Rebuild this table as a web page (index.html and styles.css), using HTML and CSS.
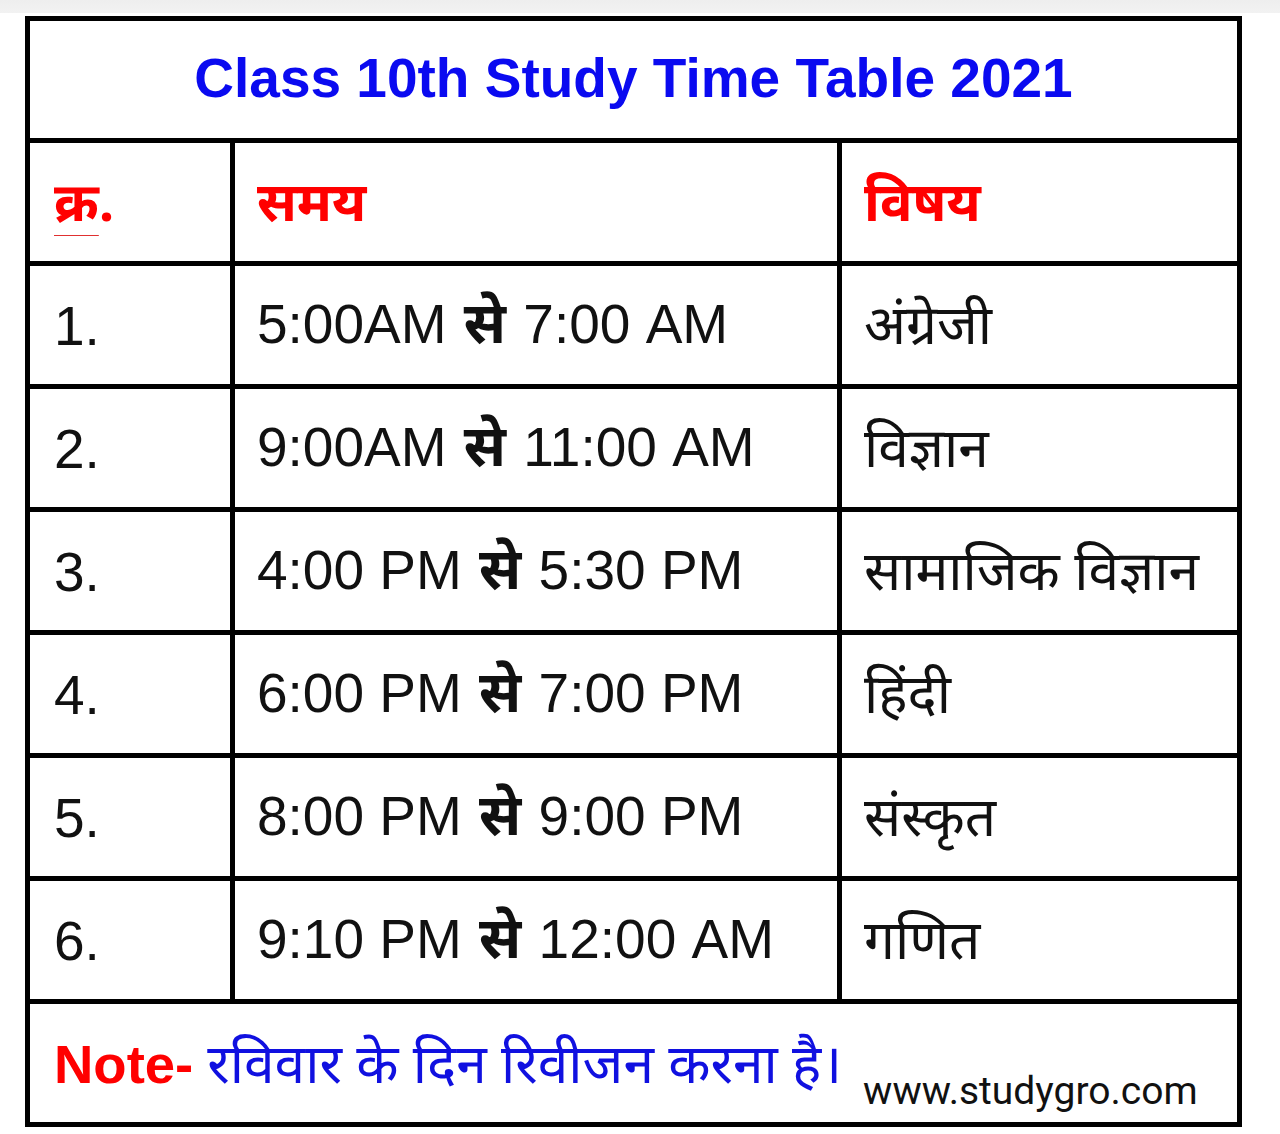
FILE: index.html
```html
<!DOCTYPE html>
<html lang="hi">
<head>
<meta charset="utf-8">
<title>Class 10th Study Time Table 2021</title>
<link rel="stylesheet" href="styles.css">
</head>
<body>
<div class="topbar"></div>
<div class="sheet">
  <div class="grid">
    <div class="cell title"><span>Class 10th Study Time Table 2021</span></div>

    <div class="cell head first"><span><span class="kr">क्र</span>.</span></div>
    <div class="cell head"><span>समय</span></div>
    <div class="cell head"><span>विषय</span></div>

    <div class="cell num first"><span>1.</span></div>
    <div class="cell time"><span>5:00AM <b>से</b> 7:00 AM</span></div>
    <div class="cell subj"><span>अंग्रेजी</span></div>

    <div class="cell num first"><span>2.</span></div>
    <div class="cell time"><span>9:00AM <b>से</b> 11:00 AM</span></div>
    <div class="cell subj"><span>विज्ञान</span></div>

    <div class="cell num first"><span>3.</span></div>
    <div class="cell time"><span>4:00 PM <b>से</b> 5:30 PM</span></div>
    <div class="cell subj"><span>सामाजिक विज्ञान</span></div>

    <div class="cell num first"><span>4.</span></div>
    <div class="cell time"><span>6:00 PM <b>से</b> 7:00 PM</span></div>
    <div class="cell subj"><span>हिंदी</span></div>

    <div class="cell num first"><span>5.</span></div>
    <div class="cell time"><span>8:00 PM <b>से</b> 9:00 PM</span></div>
    <div class="cell subj"><span>संस्कृत</span></div>

    <div class="cell num first"><span>6.</span></div>
    <div class="cell time"><span>9:10 PM <b>से</b> 12:00 AM</span></div>
    <div class="cell subj"><span>गणित</span></div>

    <div class="cell note">
      <span class="note-label">Note-</span>
      <span class="note-text">रविवार के दिन रिवीजन करना है।</span>
      <span class="site">www.studygro.com</span>
    </div>
  </div>
</div>
</body>
</html>
```

FILE: styles.css
```css
html, body {
  margin: 0;
  padding: 0;
  background: #ffffff;
}

body {
  width: 1280px;
  height: 1134px;
  overflow: hidden;
  font-family: "Liberation Sans", Arial, "Noto Sans Devanagari", "Noto Sans", sans-serif;
  color: #111;
}

.topbar {
  height: 13px;
  background: linear-gradient(#eeeeee, #f2f2f2);
}

.sheet {
  padding: 3px 0 0 25px;
}

.grid {
  display: grid;
  width: 1207px;
  grid-template-columns: 200px 602px 395px;
  grid-template-rows: 117px repeat(8, 118px);
  gap: 5px;
  padding: 5px;
  background: #000;
}

.cell {
  background: #fff;
  display: flex;
  align-items: center;
  padding-left: 22px;
  white-space: nowrap;
}

.cell > span {
  line-height: 70px;
}

.cell.first {
  padding-left: 24px;
}

.title {
  grid-column: 1 / 4;
  justify-content: center;
  padding-left: 0;
  padding-bottom: 4px;
  color: #0a0af0;
  font-weight: bold;
  font-size: 55px;
}

.head {
  color: #ff0000;
  font-weight: bold;
  font-size: 54px;
  font-family: "Noto Sans Devanagari", "Liberation Sans", sans-serif;
  padding-top: 12px;
}

.kr {
  text-decoration: underline;
  text-decoration-thickness: 1px;
  text-underline-offset: 14px;
  text-decoration-color: #e03030;
}

.num, .time {
  font-size: 55px;
  padding-top: 2px;
}

.time b {
  font-family: "Noto Sans Devanagari", "Liberation Sans", sans-serif;
  font-weight: bold;
  font-size: 1.04em;
  margin: 0 2px;
}

.subj {
  font-family: "Noto Sans Devanagari", "Noto Sans", sans-serif;
  font-size: 55px;
  padding-top: 12px;
}

.note {
  grid-column: 1 / 4;
  align-items: baseline;
  padding-top: 26px;
  padding-left: 24px;
}

.note-label {
  color: #ff0000;
  font-weight: bold;
  font-size: 54.5px;
}

.note-text {
  color: #1010e0;
  font-family: "Noto Sans Devanagari", "Noto Sans", sans-serif;
  font-size: 55px;
  margin-left: 14px;
}

.site {
  font-family: Roboto, "Liberation Sans", sans-serif;
  font-size: 39px;
  color: #111;
  margin-left: 21px;
  position: relative;
  top: 21px;
}
```
